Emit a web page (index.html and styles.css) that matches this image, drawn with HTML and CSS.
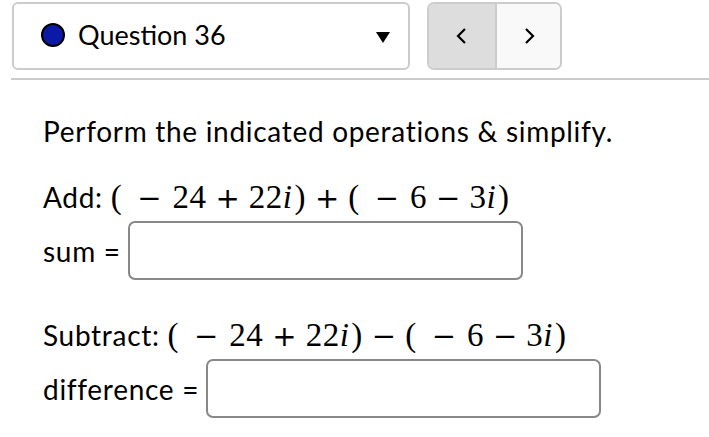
FILE: index.html
```html
<!DOCTYPE html>
<html>
<head>
<meta charset="utf-8">
<link rel="stylesheet" href="styles.css">
</head>
<body>
<div class="page">
  <div class="header">
    <div class="select">
      <span class="dot"></span>
      <span class="qname">Question 36</span>
      <span class="caret"></span>
    </div>
    <div class="nav">
      <div class="navbtn prev"><svg width="14" height="20" viewBox="0 0 14 20"><path d="M10 3 L3 10 L10 17" fill="none" stroke="#000" stroke-width="2.2"/></svg></div>
      <div class="navbtn next"><svg width="14" height="20" viewBox="0 0 14 20"><path d="M4 3 L11 10 L4 17" fill="none" stroke="#000" stroke-width="2.2"/></svg></div>
    </div>
  </div>
  <div class="rule"></div>
  <div class="content">
    <p class="intro">Perform the indicated operations &amp; simplify.</p>
    <p class="prob">Add: <span class="math">(<span class="op">−</span>24<span class="bin">+</span>22<i>i</i>)<span class="bin">+</span>(<span class="op">−</span>6<span class="bin">−</span>3<i>i</i>)</span></p>
    <div class="answer"><span>sum =</span><span class="box"></span></div>
    <p class="prob sub">Subtract: <span class="math">(<span class="op">−</span>24<span class="bin">+</span>22<i>i</i>)<span class="bin">−</span>(<span class="op">−</span>6<span class="bin">−</span>3<i>i</i>)</span></p>
    <div class="answer"><span>difference =</span><span class="box"></span></div>
  </div>
</div>
</body>
</html>
```
FILE: styles.css
```css
html, body { margin: 0; padding: 0; background: #fff; }
body { font-family: "Lato", "Open Sans", sans-serif; color: #000; }
.page { width: 709px; height: 437px; overflow: hidden; }
.header { display: flex; gap: 17px; padding: 2px 0 0 12px; }
.select {
  box-sizing: border-box; width: 398px; height: 68px;
  border: 2px solid #ccc; border-radius: 6px; background: #fff;
  display: flex; align-items: center; padding-left: 27px;
}
.dot {
  box-sizing: border-box; width: 24px; height: 24px; border-radius: 50%;
  background: #0a1aa6; border: 2.5px solid #000; margin-top: -2px;
}
.qname { font-size: 27px; margin-left: 13px; margin-top: -3px; }
.caret {
  margin-left: auto; margin-right: 18px; width: 0; height: 0;
  border-left: 7px solid transparent; border-right: 7px solid transparent;
  border-top: 11px solid #000; margin-top: 3px;
}
.nav {
  box-sizing: border-box; width: 135px; height: 68px; display: flex;
  border: 2px solid #ccc; border-radius: 7px; overflow: hidden;
}
.navbtn { display: flex; align-items: center; justify-content: center; }
.prev { width: 66px; background: #ddd; border-right: 2px solid #ccc; }
.next { flex: 1; background: #f9f9f9; }
.rule { height: 2px; background: #ccc; margin: 8px 0 0 11px; }
.content { padding-left: 43px; letter-spacing: 0.7px; }
.intro { font-size: 28px; margin: 33px 0 0; line-height: 36px; }
.prob { font-size: 28px; margin: 28px 0 0; line-height: 40px; }
.sub { margin-top: 35px; }
.math { font-family: "Liberation Serif", "DejaVu Serif", serif; font-size: 33px; margin-left: 0; letter-spacing: 0.5px; }
.math i { font-style: italic; margin-right: 2px; }
.op, .bin { font-family: "DejaVu Sans", sans-serif; font-size: 29px; letter-spacing: 0; }
.op { margin: 0 11px 0 15px; }
.bin { margin: 0 9px; }
.answer { display: flex; align-items: center; font-size: 28px; gap: 7px; margin-top: 3px; }
.box {
  box-sizing: border-box; width: 395px; height: 59px; flex: none;
  border: 2px solid #888; border-radius: 7px;
}
```
